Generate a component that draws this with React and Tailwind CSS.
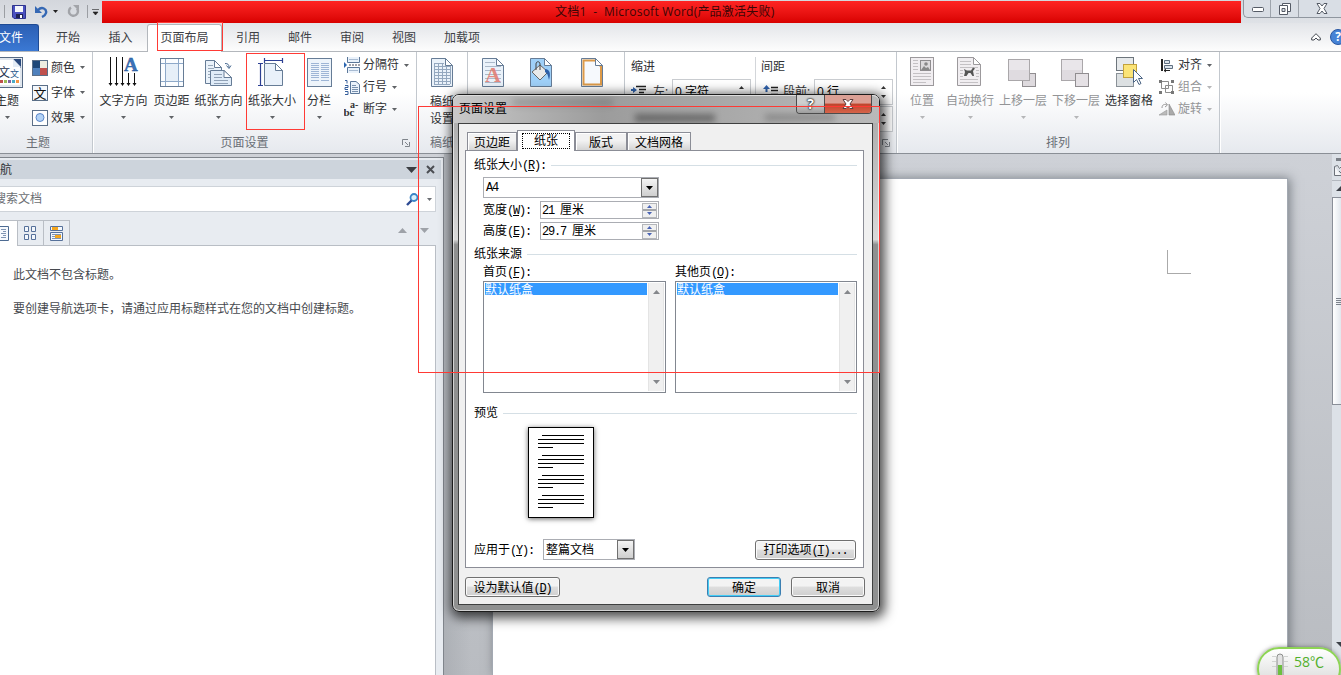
import React from 'react';

const pageSetupButtons = [
  { label: '文字方向', width: 'w-[51px]', icon: 'direction' },
  { label: '页边距', width: 'w-[45px]', icon: 'margins' },
  { label: '纸张方向', width: 'w-[49px]', icon: 'orientation' },
  { label: '纸张大小', width: 'w-[58px]', icon: 'size' },
  { label: '分栏', width: 'w-[36px]', icon: 'columns' },
];

const arrangeButtons = [
  { label: '位置', width: 'w-[44px]', icon: 'position', disabled: true },
  { label: '自动换行', width: 'w-[52px]', icon: 'wrap', disabled: true },
  { label: '上移一层', width: 'w-[54px]', icon: 'forward', disabled: true },
  { label: '下移一层', width: 'w-[52px]', icon: 'backward', disabled: true },
  { label: '选择窗格', width: 'w-[54px]', icon: 'selection', noArrow: true },
];

function Arrow({ className = 'text-[#5f6266]', up = false }) {
  return (
    <svg width="5" height="3" viewBox="0 0 5 3" className={`shrink-0 ${className}`}>
      <path d={up ? 'M0 3h5L2.5 0z' : 'M0 0h5L2.5 3z'} fill="currentColor" />
    </svg>
  );
}

// Sheet with a folded corner, shared by most of the page icons
function Sheet({ x = 0, y = 0, w = 22, h = 29, fill = '#eaf2fa', stroke = '#667c96' }) {
  return (
    <g transform={`translate(${x + 0.5} ${y + 0.5})`}>
      <path d={`M0 0H${w - 8}L${w - 1} 7V${h - 1}H0z`} fill={fill} stroke={stroke} />
      <path d={`M${w - 8} 0V7H${w - 1}z`} fill="#fff" stroke={stroke} />
    </g>
  );
}

function BigIcon({ name }) {
  const art = {
    direction: (
      <>
        <path d="M2.500 0v28M8.500 0v28M14.500 0v28M20.500 16v12M26.500 16v12" stroke="#111" />
        <path d="M.5 26h4l-2 3zM6.500 26h4l-2 3zM12.500 26h4l-2 3zM18.500 26h4l-2 3zM24.500 26h4l-2 3z" fill="#111" />
        <text x="16" y="14" fontSize="19" fontWeight="bold" fontFamily="Liberation Serif" fill="#3b73b9" stroke="#1e4f91" strokeWidth=".4">A</text>
      </>
    ),
    margins: (
      <>
        <rect x="4.500" y="1.500" width="23" height="28" fill="#fbfdff" stroke="#667c96" />
        <rect x="10" y="7" width="12" height="17" fill="#e6eff8" />
        <path d="M9.500 2v27M22.500 2v27M5 6.500h22M5 24.500h22" stroke="#8ea9c9" />
      </>
    ),
    orientation: (
      <>
        <Sheet x={2} y={3} w={17} h={24} />
        <path d="M5 8.500h5M5 11.500h6M5 14.500h2M5 17.500h2M5 20.500h2" stroke="#9aa9ba" />
        <path d="M22 6.500c3 0 4 1 4 4m-2.500-2 2.500 3 2-3" fill="none" stroke="#46688f" />
        <path d="M7.500 13.500H21l7.500 7v8h-21z" fill="#e0ecf8" stroke="#667c96" />
        <path d="M21 13.500v7h7.500z" fill="#fff" stroke="#667c96" />
        <path d="M11 17.500h8M11 20.500h8M11 23.500h14M11 26.500h14" stroke="#8fa0b5" />
      </>
    ),
    size: (
      <>
        <Sheet x={8} y={6} w={19} h={23} fill="#e9f1fa" />
        <path d="M8 3.500h19M8.500 1v5M26.500 1v5M4.500 7v21M2 6.500h5M2 28.500h5" stroke="#2c3f93" strokeWidth="1.200" />
      </>
    ),
    columns: (
      <>
        <rect x="4.500" y="1.500" width="24" height="28" fill="#edf4fb" stroke="#667c96" />
        <path
          d="M8 6.500h8M18 6.500h8M8 8.500h8M18 8.500h8M8 10.500h8M18 10.500h8M8 12.500h8M18 12.500h8M8 14.500h8M18 14.500h8M8 16.500h8M18 16.500h8M8 18.500h8M18 18.500h8M8 20.500h8M18 20.500h8M8 23.500h8M18 23.500h8"
          stroke="#9db5d6"
        />
      </>
    ),
    grid: (
      <>
        <Sheet x={5} y={1} w={22} h={29} />
        <path d="M8 6.500h10M8 9.500h16M8 12.500h16M8 15.500h16M8 18.500h16M8 21.500h16M8 24.500h16M8 27.500h16M8.500 6v21M12.500 6v21M16.500 6v21M20.500 9v18M24.500 9v18" stroke="#94a8bf" />
      </>
    ),
    watermark: (
      <>
        <Sheet x={5} y={1} w={22} h={29} />
        <path d="M8 5.500h10M8 9.500h16M8 13.500h16M8 17.500h16M8 21.500h16M8 25.500h16" stroke="#abb9c9" />
        <text x="8" y="25" fontSize="22" fontWeight="bold" fontFamily="Liberation Serif" fill="#e2796d" fillOpacity=".85">A</text>
      </>
    ),
    color: (
      <>
        <Sheet x={5} y={1} w={22} h={29} fill="#9fd0f8" />
        <path d="M7 15l8-7 8 7-8 8z" fill="#e9e9e9" stroke="#666" />
        <path d="M11 13V7c0-3 4-3 4 0v6" fill="none" stroke="#444" />
        <path d="M20 12c5 0 6 5 4 11-1-4-1-6-4-8z" fill="#2d5fa8" />
      </>
    ),
    border: (
      <>
        <Sheet x={5} y={1} w={22} h={29} />
        <path d="M7.500 3.500H19l6 6v18H7.500z" fill="#f6f9fd" stroke="#dd9a48" strokeWidth="2" />
        <path d="M19.500 1.500v7h7z" fill="#fff" stroke="#667c96" />
      </>
    ),
    position: (
      <>
        <rect x="4.500" y=".5" width="23" height="28" fill="#f1eef1" stroke="#9c999c" />
        <path d="M7 3.500h5M7 6.500h5M7 9.500h5M7 12.500h5M7 16.500h18M7 19.500h18M7 22.500h18M7 25.500h13" stroke="#c4c1c4" />
        <rect x="14.500" y="3.500" width="10" height="10" fill="#dcdadc" stroke="#8f8d8f" />
        <circle cx="20" cy="7" r="1.800" fill="#888" />
        <path d="M15 13l3-4 2 2 2-1 2 3z" fill="#888" />
      </>
    ),
    wrap: (
      <>
        <Sheet x={3} y={0} w={24} h={29} fill="#f1eef1" stroke="#9c999c" />
        <path d="M6 4.500h11M6 7.500h11M6 10.500h18M6 13.500h3M22 13.500h3M6 16.500h3M22 16.500h3M6 19.500h3M22 19.500h3M6 22.500h18M6 25.500h18" stroke="#c4c1c4" />
        <path d="M10 12l3 1.500h4l2-3 2 1-2 2.500 1 5h-1.500l-2-3h-2l-2 3H10l1-4z" fill="#555" />
      </>
    ),
    forward: (
      <>
        <rect x="15.500" y="16.500" width="13" height="13" fill="#dedade" stroke="#908d90" />
        <rect x="1.500" y="2.500" width="21" height="21" fill="#e9e6ea" stroke="#aaa7aa" />
        <path d="M2 13h20v10H2z" fill="#dfdbe0" />
      </>
    ),
    backward: (
      <>
        <rect x="1.500" y="2.500" width="21" height="21" fill="#e9e6ea" stroke="#aaa7aa" />
        <path d="M2 13h20v10H2z" fill="#dfdbe0" />
        <rect x="15.500" y="16.500" width="13" height="13" fill="#e5e1e5" stroke="#908d90" />
      </>
    ),
    selection: (
      <>
        <rect x="3.500" y=".5" width="17" height="13" fill="#e6e9eb" stroke="#6d757c" />
        <rect x="3.500" y="16.500" width="17" height="13" fill="#dce0e2" stroke="#8a9197" />
        <rect x="10.500" y="7.500" width="13" height="13" fill="#fbe477" stroke="#c3a23c" />
        <path d="M20.500 12.500v13l3-3 2.500 5 2-1-2.500-5h4z" fill="#fff" stroke="#4d6685" />
      </>
    ),
    theme: (
      <>
        <rect x=".5" y=".5" width="31" height="30" fill="#fff" stroke="#566a84" />
        <rect x="2" y="2" width="28" height="27" fill="none" stroke="#c3cfdd" />
        <path d="M22 2h8v9z" fill="#2b4a7d" />
        <path d="M22 2v8h8z" fill="#e5edf6" />
        <text x="7" y="20" fontSize="12" fontFamily="Noto Sans CJK SC" fill="#1d3350">文</text>
        <text x="19" y="20" fontSize="9" fontFamily="Noto Sans CJK SC" fill="#2b5a8d">文</text>
        <path d="M9 23h3v3H9z" fill="#c0504d" />
        <path d="M13 23h3v3h-3z" fill="#9bbb59" />
        <path d="M17 23h3v3h-3z" fill="#8064a2" />
        <path d="M21 23h3v3h-3z" fill="#4bacc6" />
        <path d="M25 23h3v3h-3z" fill="#f79646" />
      </>
    ),
  };
  return (
    <svg width="32" height="32" viewBox="0 0 32 32" className="shrink-0">
      {art[name]}
    </svg>
  );
}

function BigButton({ label, width, icon, disabled, noArrow }) {
  return (
    <div className={`flex shrink-0 flex-col items-center ${width}`}>
      <BigIcon name={icon} />
      <span className={`mt-[3px] h-[18px] whitespace-nowrap leading-[18px] ${disabled ? 'text-[#939496]' : 'text-[#2f3134]'}`}>{label}</span>
      {!noArrow && <Arrow className={`mt-[6px] ${disabled ? 'text-[#b5b6b8]' : 'text-[#5f6266]'}`} />}
    </div>
  );
}

function SmallIcon({ name }) {
  const art = {
    colors: (
      <>
        <path d="M0 0h8v8H0z" fill="#1f4878" />
        <path d="M8 0h8v8H8z" fill="#eeece1" />
        <path d="M0 8h8v8H0z" fill="#4f81bd" />
        <path d="M8 8h8v8H8z" fill="#c0504d" />
        <rect x=".5" y=".5" width="15" height="15" fill="none" stroke="#5b6f88" />
      </>
    ),
    fonts: (
      <>
        <rect x=".5" y=".5" width="15" height="15" fill="#f4f8fc" stroke="#5b6f88" />
        <text x="1.500" y="13" fontSize="13" fontFamily="Noto Sans CJK SC" fill="#111">文</text>
      </>
    ),
    effects: (
      <>
        <rect x=".5" y=".5" width="15" height="15" fill="#fff" stroke="#5b6f88" />
        <circle cx="8" cy="7.500" r="4" fill="#b2d2f6" stroke="#5b86c8" />
      </>
    ),
    breaks: (
      <>
        <path d="M3.500 0v5.500h12V0M3.500 16v-5.500h12V16" fill="#eaf2fb" stroke="#5b7799" />
        <path d="M5 2.500h9M5 13.500h9" stroke="#a8bbd2" />
        <path d="M5 8h11" stroke="#445" strokeDasharray="2 1" />
        <path d="M0 5l3 3-3 3z" fill="#2b66b0" />
      </>
    ),
    lines: (
      <>
        <path d="M6.500 2.500H12l3.500 3v9h-9z" fill="#eaf2fb" stroke="#5b7799" />
        <path d="M8 6.500h4M8 8.500h6M8 10.500h6M8 12.500h6" stroke="#7890ad" />
        <path d="M1 1.500h2v3M1 6.500h3v2H1v2h3M1 12.500h3v3H1" fill="none" stroke="#365f9c" />
      </>
    ),
    hyphen: (
      <>
        <text x="-.5" y="15" fontSize="11" fontWeight="bold" fontFamily="Liberation Serif" fill="#333">bc</text>
        <text x="6" y="7" fontSize="10" fontWeight="bold" fontFamily="Liberation Serif" fill="#333">a-</text>
      </>
    ),
    align: (
      <>
        <path d="M2 2h2v12H2z" fill="#222" />
        <path d="M5.500 3.500h5v3h-5zM5.500 8.500h8v3h-8z" fill="#dce4ec" stroke="#5f6f80" />
        <path d="M5 13.500h6M7 12l-2 1.500L7 15" fill="none" stroke="#222" />
      </>
    ),
    group: (
      <>
        <path d="M2.500 2.500h7v7h-7zM6.500 6.500h7v7h-7z" fill="none" stroke="#8d8d8d" />
        <path d="M0 1h3v3H0zM12 1h3v3h-3zM0 12h3v3H0zM12 12h3v3h-3z" fill="#777" />
      </>
    ),
    rotate: (
      <>
        <path d="M0 14l8-5v5z" fill="#bbb" stroke="#999" strokeWidth=".6" />
        <path d="M10 14V3l6 11z" fill="#aaa" stroke="#888" strokeWidth=".6" />
        <path d="M3 7c0-4 3-4 5-3M6.500 1.500L8.500 4 6 6" fill="none" stroke="#999" />
      </>
    ),
  };
  return (
    <svg width="16" height="16" viewBox="0 0 16 16" className="shrink-0">
      {art[name]}
    </svg>
  );
}

function SmallButton({ label, icon, disabled, height = 'h-[22px]' }) {
  return (
    <div className={`flex items-center ${height} ${disabled ? 'text-[#939496]' : 'text-[#2f3134]'}`}>
      <SmallIcon name={icon} />
      <span className="ml-[3px] mr-[5px] whitespace-nowrap leading-[18px]">{label}</span>
      <Arrow className={disabled ? 'text-[#b5b6b8]' : 'text-[#5f6266]'} />
    </div>
  );
}

function Launcher() {
  return (
    <svg width="8" height="8" viewBox="0 0 8 8" className="text-[#7f848b]">
      <path d="M.5 6V.5H6M3 3l3 3M7.500 3v4.500H3" fill="none" stroke="currentColor" />
    </svg>
  );
}

function RibbonGroup({ label, width, launcher, labelClass = '', children }) {
  return (
    <div className={`flex h-[101px] shrink-0 flex-col border-r border-[#c3c8ce] shadow-[1px_0_0_#fff] ${width}`}>
      <div className="flex h-[82px] pt-[5px]">{children}</div>
      <div className="flex h-[18px] items-center">
        <span className={`flex-1 whitespace-nowrap text-center leading-[18px] text-[#6a6f76] ${labelClass}`}>{label}</span>
        {launcher && <span className="-ml-[14px] w-[14px]"><Launcher /></span>}
      </div>
    </div>
  );
}

function RibbonSpin({ value }) {
  return (
    <div className="flex h-[26px] w-[79px] items-center border border-[#c9ccd0] bg-white pl-[2px] pr-[6px] text-black">
      <span className="flex-1 whitespace-nowrap leading-[18px]">{value}</span>
      <span className="flex h-full flex-col justify-between py-[6px]">
        <Arrow up className="text-[#333]" />
        <Arrow className="text-[#333]" />
      </span>
    </div>
  );
}

function IndentIcon({ vertical }) {
  return (
    <svg width="16" height="14" viewBox="0 0 16 14" className="shrink-0">
      <path d={vertical ? 'M8 2.500h7M8 5.500h7M8 9.500h7M8 12.500h7' : 'M5 1.500h10M8 4.500h7M8 7.500h5M5 10.500h10'} stroke="#222" strokeWidth="1.400" />
      <path d={vertical ? 'M3.500 0L0 4h2.500v3h2V4H7z' : 'M6 5L2 2v2H0v2h2v2z'} fill="#2f62ad" />
    </svg>
  );
}

function TitleBar() {
  return (
    <div className="flex h-[23px] bg-linear-to-b from-[#d3d6dc] to-[#dfe2e7]">
      <div className="flex w-[102px] items-center pl-[4px]">
        <span className="h-[13px] w-px bg-[#9b9ea3]" />
        <svg width="14" height="14" viewBox="0 0 14 14" className="ml-[7px]">
          <path d="M.5.5h13v13H2l-1.500-1.500z" fill="#4a50c0" stroke="#2f358e" />
          <path d="M3 1h8v6H3z" fill="#f4f6fb" />
          <path d="M4 9h7v4H4z" fill="#1f2352" />
          <path d="M8 10h2v3H8z" fill="#fff" />
        </svg>
        <svg width="13" height="13" viewBox="0 0 13 13" className="ml-[9px]">
          <path d="M3 5c4-4 9-1 8 3-.5 2-2 3-4 4" fill="none" stroke="#3568b4" strokeWidth="2.400" />
          <path d="M0 1v7h7z" fill="#3568b4" />
        </svg>
        <Arrow className="ml-[5px] text-[#222]" />
        <svg width="13" height="13" viewBox="0 0 13 13" className="ml-[9px]">
          <path d="M4 2.500a4.500 4.500 0 1 0 6 1" fill="none" stroke="#a2a4a9" strokeWidth="2.400" />
          <path d="M6 0h6v6z" fill="#a2a4a9" />
        </svg>
        <span className="ml-[7px] h-[13px] w-px bg-[#9b9ea3]" />
        <svg width="7" height="6" viewBox="0 0 7 6" className="ml-[4px] shrink-0">
          <path d="M0 .5h7M1 3h5L3.500 6z" fill="#222" stroke="#222" strokeWidth=".6" />
        </svg>
      </div>
      <div className="mt-px h-[22px] w-[1139px] bg-linear-to-b from-[#ff2322] to-[#d80000] pl-[453px]">
        <span className="whitespace-pre leading-[22px] tracking-[0.22px] text-[#3c0606]">文档1  -  Microsoft Word(产品激活失败)</span>
      </div>
      <div className="ml-[2px] flex h-[18px] flex-1 rounded-bl-[5px] border-b border-l border-[#8f969f] bg-[#d9dee5]">
        <div className="flex w-[27px] items-center border-r border-[#9ea4ac] pl-[8px]">
          <svg width="12" height="6" viewBox="0 0 12 6"><rect x=".5" y="1.500" width="11" height="4" rx="1" fill="#fff" stroke="#555b66" /></svg>
        </div>
        <div className="flex w-[28px] items-center justify-center border-r border-[#9ea4ac]">
          <svg width="12" height="12" viewBox="0 0 12 12">
            <path d="M3.500.5h8v8h-8z" fill="#fff" stroke="#555b66" />
            <path d="M.5 2.500h8v9h-8z" fill="#fff" stroke="#555b66" />
            <path d="M3 5.500h3v3H3z" fill="#d9dee5" stroke="#555b66" />
          </svg>
        </div>
        <div className="flex items-center pl-[17px]">
          <svg width="12" height="11" viewBox="0 0 12 11">
            <path d="M1 .5h3l2 2.500L8 .5h3L8 5.500l3 5H8L6 8l-2 2.500H1l3-5z" fill="#fff" stroke="#555b66" />
          </svg>
        </div>
      </div>
    </div>
  );
}

function TabBar() {
  return (
    <div className="flex h-[29px] items-end border-b border-[#b3b7bc] bg-linear-to-b from-[#e3e5e9] to-[#fdfdfd] text-[#3d4045]">
      <div className="mr-[3px] flex h-[27px] w-[39px] items-center rounded-tr-[3px] border border-l-0 border-b-0 border-[#1f4b94] bg-linear-to-b from-[#2c5fb4] to-[#3b79d4] text-white">
        <span className="-ml-px whitespace-nowrap leading-[18px]">文件</span>
      </div>
      <span className="w-[52px] text-center leading-[27px]">开始</span>
      <span className="w-[53px] text-center leading-[27px]">插入</span>
      <div className="-mb-px h-[28px] w-[75px] rounded-t-[3px] border border-b-0 border-[#b3b7bc] bg-white text-center">
        <span className="leading-[26px]">页面布局</span>
      </div>
      <span className="w-[52px] text-center leading-[27px]">引用</span>
      <span className="w-[52px] text-center leading-[27px]">邮件</span>
      <span className="w-[52px] text-center leading-[27px]">审阅</span>
      <span className="w-[52px] text-center leading-[27px]">视图</span>
      <span className="w-[64px] text-center leading-[27px]">加载项</span>
      <div className="flex h-[28px] flex-1 items-center justify-end">
        <svg width="10" height="8" viewBox="0 0 10 8" className="mr-[9px]">
          <path d="M5 .7L9.300 5v2H7L5 5 3 7H.7V5z" fill="#fff" stroke="#454a52" />
        </svg>
        <div className="w-[11px] overflow-hidden">
          <div className="h-[16px] w-[16px] rounded-full border border-[#2a57a0] bg-[#4683d6] text-center text-[12px] font-bold leading-[14px] text-white">?</div>
        </div>
      </div>
    </div>
  );
}

function Ribbon() {
  return (
    <div className="flex h-[102px] border-b border-[#8a8f96] bg-linear-to-b from-white from-40% to-[#e6e9ee]">
      <RibbonGroup label="主题" width="w-[93px]" labelClass="pr-[16px]">
        <div className="-ml-[9px]"><BigButton label="主题" width="w-[32px]" icon="theme" /></div>
        <div className="ml-[9px] -mt-[2px]">
          <SmallButton label="颜色" icon="colors" height="h-[25px]" />
          <SmallButton label="字体" icon="fonts" height="h-[25px]" />
          <SmallButton label="效果" icon="effects" height="h-[25px]" />
        </div>
      </RibbonGroup>
      <RibbonGroup label="页面设置" width="w-[324px]" launcher labelClass="pr-[20px]">
        <div className="flex pl-[5px]">
          {pageSetupButtons.map((b) => <BigButton key={b.label} {...b} />)}
        </div>
        <div className="ml-[7px] -mt-[3px]">
          <SmallButton label="分隔符" icon="breaks" />
          <SmallButton label="行号" icon="lines" />
          <SmallButton label="断字" icon="hyphen" />
        </div>
      </RibbonGroup>
      <RibbonGroup label="稿纸" width="w-[51px]">
        <div className="flex w-[51px] flex-col items-center">
          <BigIcon name="grid" />
          <span className="mt-[4px] w-[24px] leading-[17px] text-[#2f3134]">稿纸设置</span>
        </div>
      </RibbonGroup>
      <RibbonGroup label="页面背景" width="w-[157px]">
        <div className="flex pl-[9px]">
          <div className="w-[48px]"><BigIcon name="watermark" /></div>
          <div className="w-[51px]"><BigIcon name="color" /></div>
          <BigIcon name="border" />
        </div>
      </RibbonGroup>
      <RibbonGroup label="段落" width="w-[272px]" launcher>
        <div className="flex w-[131px] flex-col border-r border-[#d3d6da] pl-[6px] text-[#2f3134]">
          <span className="pt-px leading-[18px]">缩进</span>
          <div className="mt-[3px] flex items-center">
            <IndentIcon />
            <span className="ml-[6px] w-[19px] whitespace-nowrap leading-[18px]">左:</span>
            <RibbonSpin value="0 字符" />
          </div>
          <div className="mt-px flex items-center">
            <IndentIcon />
            <span className="ml-[6px] w-[19px] whitespace-nowrap leading-[18px]">右:</span>
            <RibbonSpin value="0 字符" />
          </div>
        </div>
        <div className="flex flex-col pl-[5px] text-[#2f3134]">
          <span className="pt-px leading-[18px]">间距</span>
          <div className="mt-[3px] flex items-center pl-[2px]">
            <IndentIcon vertical />
            <span className="ml-[4px] w-[31px] whitespace-nowrap leading-[18px]">段前:</span>
            <RibbonSpin value="0 行" />
          </div>
          <div className="mt-px flex items-center pl-[2px]">
            <IndentIcon vertical />
            <span className="ml-[4px] w-[31px] whitespace-nowrap leading-[18px]">段后:</span>
            <RibbonSpin value="0 行" />
          </div>
        </div>
      </RibbonGroup>
      <RibbonGroup label="排列" width="w-[323px]">
        <div className="flex pl-[3px]">
          {arrangeButtons.map((b) => <BigButton key={b.label} {...b} />)}
        </div>
        <div className="ml-[3px] -mt-[3px]">
          <SmallButton label="对齐" icon="align" />
          <SmallButton label="组合" icon="group" disabled />
          <SmallButton label="旋转" icon="rotate" disabled />
        </div>
      </RibbonGroup>
    </div>
  );
}

function NavigationPane() {
  return (
    <div className="flex w-[444px] shrink-0 flex-col border-r border-t border-[#80858c] bg-[#e8ecf1] pt-[2px]">
      <div className="mr-[2px] flex h-[19px] items-center bg-[#cdd4dc] text-[#2f3338]">
        <span className="-ml-[12px] flex-1 leading-[18px]">导航</span>
        <svg width="11" height="6" viewBox="0 0 11 6"><path d="M0 0h11L5.500 6z" fill="#3b3e43" /></svg>
        <svg width="9" height="9" viewBox="0 0 9 9" className="ml-[9px] mr-[6px]"><path d="M1 1l7 7M8 1L1 8" stroke="#4b4e53" strokeWidth="2" /></svg>
      </div>
      <div className="mr-[7px] mt-[7px] flex h-[26px] items-center border border-l-0 border-[#ced3d9] bg-white pr-[3px] text-[#6b6e73]">
        <span className="-ml-[6px] flex-1 leading-[18px]">搜索文档</span>
        <svg width="13" height="13" viewBox="0 0 13 13">
          <circle cx="8" cy="4.500" r="3.500" fill="#d9f0fb" stroke="#3d85c6" strokeWidth="1.800" />
          <path d="M5.500 7.500L1 12" stroke="#2e4a93" strokeWidth="2.400" />
        </svg>
        <Arrow className="ml-[8px]" />
      </div>
      <div className="mr-[7px] mt-[8px] flex h-[26px] shrink-0">
        <div className="flex w-[17px] items-center border-t border-[#b9bec5] bg-white">
          <svg width="9" height="15" viewBox="0 0 9 15">
            <path d="M0 .5h8.500v14H0" fill="#f6f9fd" stroke="#4d6b92" />
            <path d="M1 3.500h5M3 5.500h3M1 7.500h5M3 9.500h3M1 11.500h5" stroke="#8095b3" />
          </svg>
        </div>
        <div className="flex w-[27px] items-center justify-center border border-[#b9bec5]">
          <svg width="13" height="15" viewBox="0 0 13 15">
            <path d="M.5.5h4v5h-4zM7.500.5h4v5h-4zM.5 8.500h4v5h-4zM7.500 8.500h4v5h-4z" fill="#f3f7fc" stroke="#56719a" />
          </svg>
        </div>
        <div className="-ml-px flex w-[27px] items-center justify-center border border-[#b9bec5]">
          <svg width="13" height="15" viewBox="0 0 13 15">
            <path d="M.5.5h12v4H.5zM.5 6.500h12v8H.5z" fill="#f3f7fc" stroke="#56719a" />
            <path d="M2 8.500h9M2 10.500h9M2 12.500h9" stroke="#8095b3" />
            <path d="M2 1h6v3H2zM5 9h6v3H5z" fill="#f3a51c" />
          </svg>
        </div>
        <div className="flex flex-1 items-center justify-end border-b border-[#b9bec5] pb-[5px]">
          <svg width="9" height="5" viewBox="0 0 9 5"><path d="M0 5h9L4.500 0z" fill="#9ea2a8" /></svg>
          <svg width="9" height="5" viewBox="0 0 9 5" className="ml-[13px] mr-[7px]"><path d="M0 0h9L4.500 5z" fill="#9ea2a8" /></svg>
        </div>
      </div>
      <div className="mr-[7px] flex-1 border-r border-[#b9bec5] bg-white pl-[13px] pt-[20px] text-[#46494e]">
        <p className="leading-[18px]">此文档不包含标题。</p>
        <p className="mt-[16px] leading-[18px]">要创建导航选项卡，请通过应用标题样式在您的文档中创建标题。</p>
      </div>
    </div>
  );
}

function Workspace() {
  return (
    <div className="flex min-h-0 flex-1 bg-linear-to-b from-[#ced1d7] to-[#b9bcc1]">
      <div className="flex pt-[3px]"><NavigationPane /></div>
      <div className="flex flex-1 overflow-hidden bg-linear-to-r from-[#9fa3a9]/50 to-transparent to-3% pl-[48px] pt-[24px]">
        <div className="flex w-[796px] justify-end border border-b-0 border-[#a3a9b2] bg-white pr-[96px] pt-[71px] shadow-[2px_0_10px_rgba(70,76,84,0.6)]">
          <div className="h-[24px] w-[24px] border-b border-l border-[#aaa]" />
        </div>
      </div>
      <div className="flex w-[9px] shrink-0 flex-col overflow-hidden bg-[#dce1e7] pt-[4px]">
        <div className="ml-[4px] h-[3px] shrink-0 bg-[#7b8087]" />
        <svg width="9" height="16" viewBox="0 0 9 16" className="shrink-0">
          <path d="M2.500 5.500l3-1 2 3 2-2M2.500 5.500v9H9M7 10l2 2" fill="#f5f6f8" stroke="#6d727a" />
        </svg>
        <div className="mt-[3px] h-px shrink-0 bg-[#b3b8bf]" />
        <svg width="9" height="16" viewBox="0 0 9 16" className="shrink-0"><path d="M4 10h5V5z" fill="#3c4047" /></svg>
        <div className="flex h-[208px] shrink-0 items-center justify-end border border-r-0 border-[#8a8f98] bg-linear-to-r from-white to-[#e2e7ed]">
          <div className="h-[7px] w-[5px] border-y border-[#7c828b] pt-px"><div className="h-[3px] border-y border-[#7c828b]" /></div>
        </div>
        <svg width="9" height="6" viewBox="0 0 9 6" className="mt-[237px] shrink-0"><path d="M4 0h5v5z" fill="#3c4047" /></svg>
      </div>
    </div>
  );
}

// Half-width characters take exactly half of a 12px full-width cell
function Half({ children }) {
  return <span className="whitespace-pre font-['Liberation_Mono',monospace] tracking-[-1.2px]">{children}</span>;
}

function HotLabel({ text, hot, tail = ':' }) {
  return (
    <span className="whitespace-nowrap leading-[14px]">
      {text}
      <Half>(<u>{hot}</u>){tail}</Half>
    </span>
  );
}

function Rule({ className = '' }) {
  return <span className={`h-px flex-1 bg-[#d5dfe5] ${className}`} />;
}

function Combo({ width, children }) {
  return (
    <div className={`flex h-[21px] items-center border border-[#abadb3] bg-white pl-[2px] ${width}`}>
      <span className="flex-1 whitespace-nowrap leading-[14px]">{children}</span>
      <span className="flex h-[19px] w-[17px] items-center justify-center border border-[#707070] bg-linear-to-b from-[#f4f4f4] to-[#cfcfcf]">
        <svg width="7" height="4" viewBox="0 0 7 4"><path d="M0 0h7L3.500 4z" fill="#000" /></svg>
      </span>
    </div>
  );
}

function Spin({ children }) {
  return (
    <div className="flex h-[18px] w-[119px] items-center border border-[#abadb3] bg-white pl-px pr-px">
      <span className="flex-1 whitespace-nowrap leading-[14px]">{children}</span>
      <span className="flex h-[15px] w-[15px] flex-col border border-[#b4b6ba] bg-[#f0f0f0]">
        <span className="flex flex-1 items-center justify-center border-b border-[#a4a6aa]"><Arrow up className="text-[#4a64b4]" /></span>
        <span className="flex flex-1 items-center justify-center border-t border-[#a4a6aa]"><Arrow className="text-[#4a64b4]" /></span>
      </span>
    </div>
  );
}

function TrayList({ width }) {
  return (
    <div className={`flex h-[112px] border border-[#828790] bg-white p-px ${width}`}>
      <div className="h-[12px] flex-1 bg-[#3399ff] text-white">
        <span className="block leading-[13px]">默认纸盒</span>
      </div>
      <div className="ml-px flex w-[16px] flex-col items-center justify-between border-x border-[#e4e4e4] bg-[#f0f0f0] py-[7px]">
        <svg width="7" height="4" viewBox="0 0 7 4"><path d="M0 4h7L3.500 0z" fill="#85878b" /></svg>
        <svg width="7" height="4" viewBox="0 0 7 4"><path d="M0 0h7L3.500 4z" fill="#85878b" /></svg>
      </div>
    </div>
  );
}

function DialogButton({ width, primary, children }) {
  return (
    <div
      className={`flex h-[20px] shrink-0 items-center justify-center rounded-[3px] border bg-linear-to-b from-[#f3f3f3] from-45% via-[#dedede] via-50% to-[#cfcfcf] pt-[2px] leading-[14px] ${width} ${
        primary ? 'border-[#3c7fb1] shadow-[inset_0_0_0_1px_#43cdf6]' : 'border-[#707070] shadow-[inset_0_0_0_1px_#fafafa]'
      }`}
    >
      <span className="whitespace-nowrap">{children}</span>
    </div>
  );
}

function DialogTab({ width, active, children }) {
  return active ? (
    <div className={`relative -mb-px flex h-[21px] items-center justify-center border border-b-0 border-[#8b8d96] bg-white ${width}`}>
      <span className="flex h-[16px] w-[48px] items-center justify-center border border-dotted border-black leading-[14px]">{children}</span>
    </div>
  ) : (
    <div className={`flex h-[18px] items-center justify-center border border-b-0 border-[#8b8d96] bg-linear-to-b from-[#f2f2f2] from-45% to-[#d4d4d4] pt-[2px] leading-[14px] shadow-[inset_1px_1px_0_#fff] ${width}`}>
      {children}
    </div>
  );
}

function PagePreview() {
  return (
    <svg width="66" height="91" viewBox="0 0 66 91" className="ml-[62px] bg-white shadow-[0_1px_5px_rgba(0,0,0,0.6)]">
      <rect x=".5" y=".5" width="65" height="90" fill="#fff" stroke="#000" />
      {[8, 28, 48, 68].map((y) => (
        <path key={y} d={`M14 ${y + 0.5}h42M10 ${y + 4.5}h46M10 ${y + 8.5}h46M10 ${y + 12.5}h15`} stroke="#000" />
      ))}
    </svg>
  );
}

function PageSetupDialog() {
  return (
    <div className="absolute left-[452px] top-[94px] h-[518px] w-[428px] rounded-[7px] border border-[#1c1c1c] bg-linear-to-b from-[#a5a5a5] from-0% via-[#d9d9d9] via-28% to-[#8f9090] to-29% text-black shadow-[inset_0_0_0_1px_rgba(255,255,255,0.6),2px_3px_12px_3px_rgba(0,0,0,0.7)]">
      <div className="relative flex h-[28px] justify-between overflow-hidden rounded-t-[6px] bg-linear-to-r from-[#c9c9c9] via-[#9c9c9c] via-35% to-[#b9b9b9] pl-[6px] pr-[7px] shadow-[inset_0_1px_0_#ddd]">
        {/* Ribbon controls showing through the glass */}
        <div className="absolute left-[60px] top-[4px] h-[7px] w-[100px] bg-black/15 blur-[3px]" />
        <div className="absolute left-[182px] top-[19px] h-[8px] w-[80px] bg-black/35 blur-[3px]" />
        <div className="absolute left-[312px] top-[19px] h-[7px] w-[70px] bg-black/20 blur-[3px]" />
        <span className="relative pt-[5px] leading-[18px]">页面设置</span>
        <div className="relative flex h-[19px] overflow-hidden rounded-b-[4px] border border-t-0 border-[#4c4c4c]">
          <div className="flex w-[28px] items-center justify-center border-r border-[#4c4c4c] bg-linear-to-b from-[#cfcfcf] from-45% to-[#9d9d9d] text-[14px] font-bold leading-[18px] text-white [text-shadow:0_0_1px_#222,0_0_2px_#222,0_0_2px_#222]">?</div>
          <div className="flex w-[46px] items-center justify-center bg-linear-to-b from-[#dba095] from-45% via-[#c0432c] via-50% to-[#d5644a]">
            <svg width="12" height="10" viewBox="0 0 12 10">
              <path d="M1 .5h3l2 2 2-2h3L8 5l3 4.500H8l-2-2-2 2H1L4 5z" fill="#fff" stroke="#5c3c3c" />
            </svg>
          </div>
        </div>
      </div>
      <div className="ml-[5px] flex h-[482px] w-[415px] flex-col border border-[#3f4040] bg-[#f0f0f0] pl-[6px] pt-[6px]">
        <div className="flex h-[20px] items-end pl-[2px]">
          <DialogTab width="w-[50px]">页边距</DialogTab>
          <DialogTab width="w-[58px]" active>纸张</DialogTab>
          <DialogTab width="w-[52px]">版式</DialogTab>
          <DialogTab width="w-[64px]">文档网格</DialogTab>
        </div>
        <div className="h-[418px] w-[399px] border border-[#8b8d96] bg-white pl-[8px] pr-[6px]">
          <div className="flex h-[26px] items-center pt-[2px]">
            <HotLabel text="纸张大小" hot="R" />
            <Rule className="ml-[5px]" />
          </div>
          <div className="pl-[9px]">
            <Combo width="w-[176px]"><Half>A4</Half></Combo>
            <div className="mt-[3px] flex items-center">
              <span className="w-[57px]"><HotLabel text="宽度" hot="W" /></span>
              <Spin><Half>21 </Half>厘米</Spin>
            </div>
            <div className="mt-[3px] flex items-center">
              <span className="w-[57px]"><HotLabel text="高度" hot="E" /></span>
              <Spin><Half>29.7 </Half>厘米</Spin>
            </div>
          </div>
          <div className="flex h-[24px] items-center pt-[4px]">
            <span className="leading-[14px]">纸张来源</span>
            <Rule className="ml-[5px]" />
          </div>
          <div className="flex pl-[9px]">
            <div className="w-[192px]">
              <div className="flex h-[17px] items-center"><HotLabel text="首页" hot="F" /></div>
              <TrayList width="w-[183px]" />
            </div>
            <div>
              <div className="flex h-[17px] items-center"><HotLabel text="其他页" hot="O" /></div>
              <TrayList width="w-[182px]" />
            </div>
          </div>
          <div className="flex h-[34px] items-center pt-[6px]">
            <span className="leading-[14px]">预览</span>
            <Rule className="ml-[5px]" />
          </div>
          <div className="-ml-[8px]"><PagePreview /></div>
          <div className="mt-[21px] flex items-center">
            <span className="w-[69px]"><HotLabel text="应用于" hot="Y" /></span>
            <Combo width="w-[92px]">整篇文档</Combo>
            <div className="ml-auto mr-px">
              <DialogButton width="w-[101px]">打印选项<Half>(<u>T</u>)...</Half></DialogButton>
            </div>
          </div>
        </div>
        <div className="mt-[9px] flex">
          <DialogButton width="w-[95px]">设为默认值<Half>(<u>D</u>)</Half></DialogButton>
          <div className="ml-[147px] flex gap-[10px]">
            <DialogButton width="w-[74px]" primary>确定</DialogButton>
            <DialogButton width="w-[74px]">取消</DialogButton>
          </div>
        </div>
      </div>
    </div>
  );
}

function TemperatureBadge() {
  return (
    <div className="absolute left-[1257px] top-[647px] flex h-[44px] w-[84px] items-start rounded-[22px] border-2 border-[#8ed455] bg-linear-to-b from-white to-[#d5d7d5] shadow-[0_0_4px_rgba(60,60,60,0.6)]">
      <svg width="18" height="26" viewBox="0 0 18 26" className="ml-[12px] mt-[2px]">
        <path d="M1 5.500h4M1 10.500h4M1 15.500h4M13 5.500h4M13 10.500h4M13 15.500h4" stroke="#d1d3d1" />
        <rect x="6" y="3" width="6" height="30" rx="3" fill="#e3e3e3" stroke="#8c8e8c" />
        <path d="M7 14h4v12H7z" fill="#6cbf3f" />
      </svg>
      <span className="ml-[5px] mt-[4px] text-[14px] leading-[18px] text-[#52b02c]">58℃</span>
    </div>
  );
}

export default function App() {
  return (
    <div className="relative flex h-[675px] w-[1341px] flex-col overflow-hidden bg-[#c5c9cf] font-['Open_Sans','Noto_Sans_CJK_SC',sans-serif] text-[12px]">
      <TitleBar />
      <TabBar />
      <Ribbon />
      <Workspace />
      <PageSetupDialog />
      <TemperatureBadge />

      {/* Red call-outs */}
      <div className="absolute left-[157px] top-[22px] h-[29px] w-[66px] border border-[#ff3a35]" />
      <div className="absolute left-[246px] top-[53px] h-[77px] w-[59px] border border-[#ff3a35]" />
      <div className="absolute left-[418px] top-[106px] h-[267px] w-[462px] border border-[#ff3a35]" />
    </div>
  );
}
